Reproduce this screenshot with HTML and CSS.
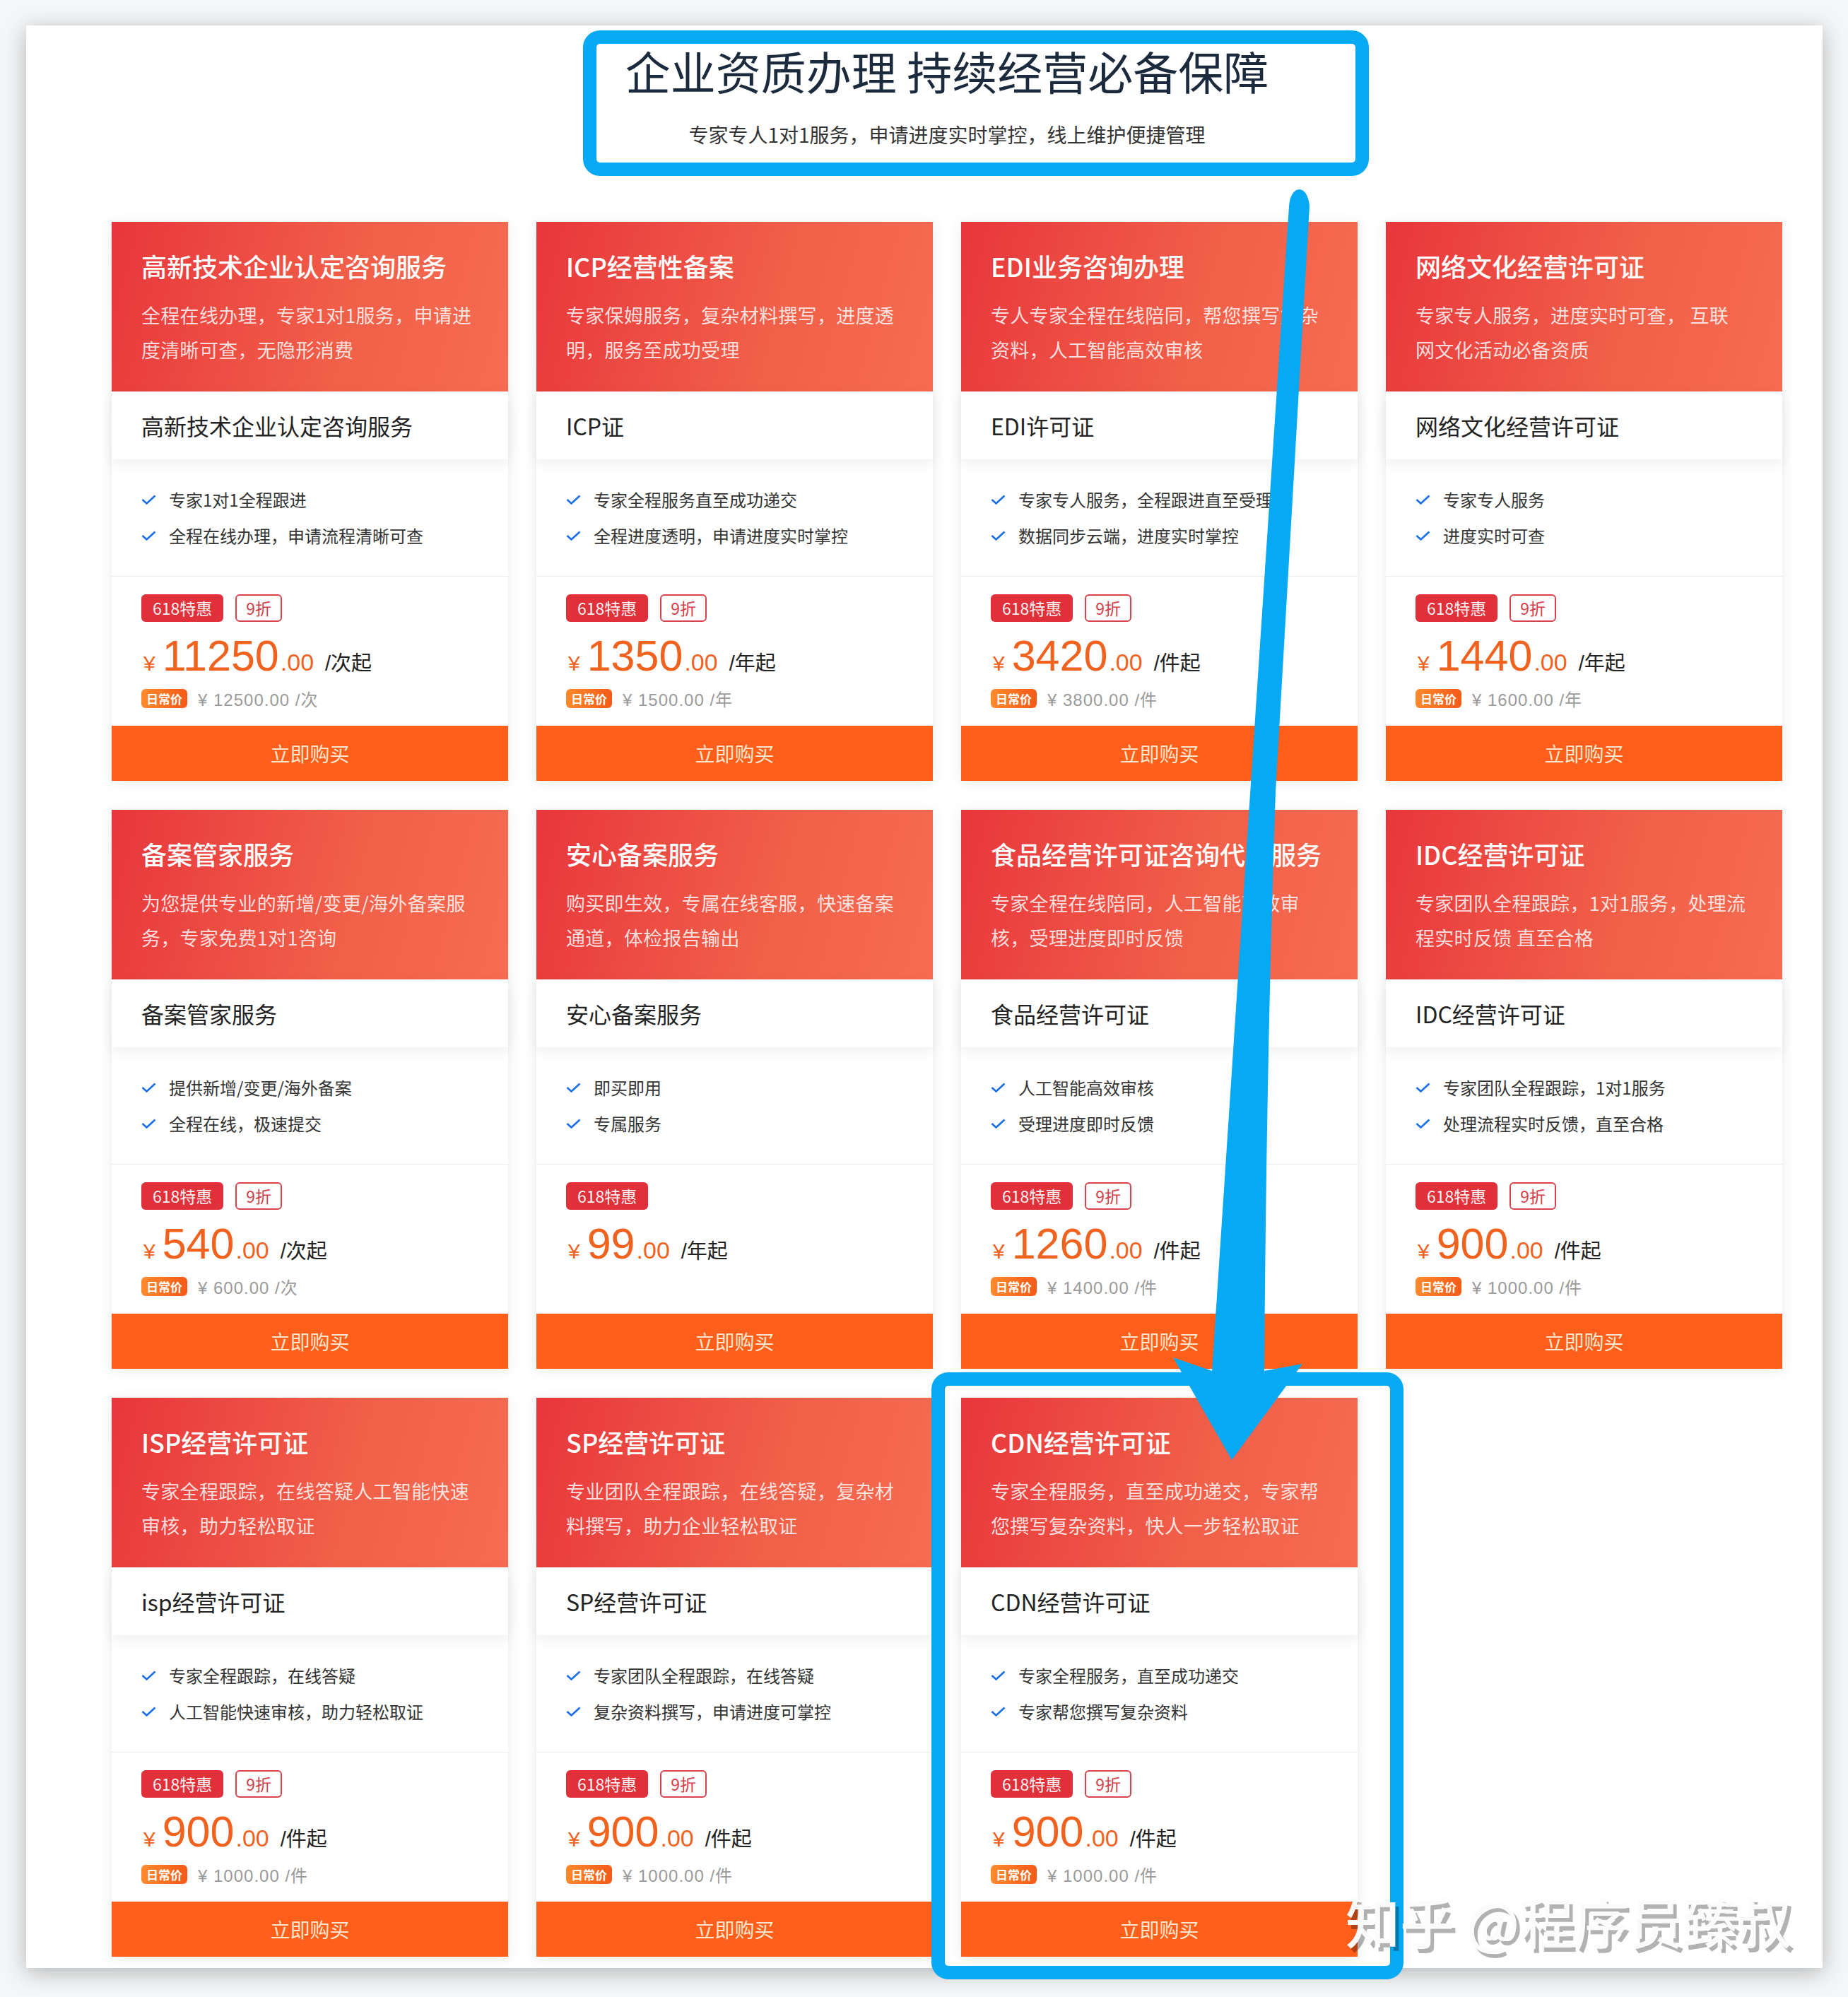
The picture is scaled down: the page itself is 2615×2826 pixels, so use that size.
FILE: index.html
```html
<!DOCTYPE html>
<html lang="zh-CN">
<head>
    <meta charset="UTF-8">
    <meta name="viewport" content="width=device-width, initial-scale=1.0">
    <title>企业资质办理</title>
    <link rel="stylesheet" href="styles.css">
</head>
<body>
    <div class="panel">
        <div class="intro">
            <h1>企业资质办理 持续经营必备保障</h1>
            <p>专家专人1对1服务，申请进度实时掌控，线上维护便捷管理</p>
        </div>

        <div class="cards">
            <div class="card">
                <div class="card-head">
                    <h3>高新技术企业认定咨询服务</h3>
                    <p>全程在线办理，专家1对1服务，申请进度清晰可查，无隐形消费</p>
                </div>
                <div class="card-name">高新技术企业认定咨询服务</div>
                <ul class="features">
                    <li>专家1对1全程跟进</li>
                    <li>全程在线办理，申请流程清晰可查</li>
                </ul>
                <div class="card-price">
                    <div class="tags"><span class="tag-hot">618特惠</span><span class="tag-off">9折</span></div>
                    <div class="price"><span class="yen">¥</span><span class="num">11250</span><span class="dec">.00</span><span class="unit">/次起</span></div>
                    <div class="daily"><span class="daily-tag">日常价</span><span class="daily-price">¥ 12500.00 /次</span></div>
                </div>
                <button class="buy">立即购买</button>
            </div>

            <div class="card">
                <div class="card-head">
                    <h3>ICP经营性备案</h3>
                    <p>专家保姆服务，复杂材料撰写，进度透明，服务至成功受理</p>
                </div>
                <div class="card-name">ICP证</div>
                <ul class="features">
                    <li>专家全程服务直至成功递交</li>
                    <li>全程进度透明，申请进度实时掌控</li>
                </ul>
                <div class="card-price">
                    <div class="tags"><span class="tag-hot">618特惠</span><span class="tag-off">9折</span></div>
                    <div class="price"><span class="yen">¥</span><span class="num">1350</span><span class="dec">.00</span><span class="unit">/年起</span></div>
                    <div class="daily"><span class="daily-tag">日常价</span><span class="daily-price">¥ 1500.00 /年</span></div>
                </div>
                <button class="buy">立即购买</button>
            </div>

            <div class="card">
                <div class="card-head">
                    <h3>EDI业务咨询办理</h3>
                    <p>专人专家全程在线陪同，帮您撰写复杂资料，人工智能高效审核</p>
                </div>
                <div class="card-name">EDI许可证</div>
                <ul class="features">
                    <li>专家专人服务，全程跟进直至受理</li>
                    <li>数据同步云端，进度实时掌控</li>
                </ul>
                <div class="card-price">
                    <div class="tags"><span class="tag-hot">618特惠</span><span class="tag-off">9折</span></div>
                    <div class="price"><span class="yen">¥</span><span class="num">3420</span><span class="dec">.00</span><span class="unit">/件起</span></div>
                    <div class="daily"><span class="daily-tag">日常价</span><span class="daily-price">¥ 3800.00 /件</span></div>
                </div>
                <button class="buy">立即购买</button>
            </div>

            <div class="card">
                <div class="card-head">
                    <h3>网络文化经营许可证</h3>
                    <p>专家专人服务，进度实时可查， 互联<br>网文化活动必备资质</p>
                </div>
                <div class="card-name">网络文化经营许可证</div>
                <ul class="features">
                    <li>专家专人服务</li>
                    <li>进度实时可查</li>
                </ul>
                <div class="card-price">
                    <div class="tags"><span class="tag-hot">618特惠</span><span class="tag-off">9折</span></div>
                    <div class="price"><span class="yen">¥</span><span class="num">1440</span><span class="dec">.00</span><span class="unit">/年起</span></div>
                    <div class="daily"><span class="daily-tag">日常价</span><span class="daily-price">¥ 1600.00 /年</span></div>
                </div>
                <button class="buy">立即购买</button>
            </div>

            <div class="card">
                <div class="card-head">
                    <h3>备案管家服务</h3>
                    <p>为您提供专业的新增/变更/海外备案服务，专家免费1对1咨询</p>
                </div>
                <div class="card-name">备案管家服务</div>
                <ul class="features">
                    <li>提供新增/变更/海外备案</li>
                    <li>全程在线，极速提交</li>
                </ul>
                <div class="card-price">
                    <div class="tags"><span class="tag-hot">618特惠</span><span class="tag-off">9折</span></div>
                    <div class="price"><span class="yen">¥</span><span class="num">540</span><span class="dec">.00</span><span class="unit">/次起</span></div>
                    <div class="daily"><span class="daily-tag">日常价</span><span class="daily-price">¥ 600.00 /次</span></div>
                </div>
                <button class="buy">立即购买</button>
            </div>

            <div class="card">
                <div class="card-head">
                    <h3>安心备案服务</h3>
                    <p>购买即生效，专属在线客服，快速备案通道，体检报告输出</p>
                </div>
                <div class="card-name">安心备案服务</div>
                <ul class="features">
                    <li>即买即用</li>
                    <li>专属服务</li>
                </ul>
                <div class="card-price">
                    <div class="tags"><span class="tag-hot">618特惠</span></div>
                    <div class="price"><span class="yen">¥</span><span class="num">99</span><span class="dec">.00</span><span class="unit">/年起</span></div>
                </div>
                <button class="buy">立即购买</button>
            </div>

            <div class="card">
                <div class="card-head">
                    <h3>食品经营许可证咨询代办服务</h3>
                    <p>专家全程在线陪同，人工智能高效审<br>核，受理进度即时反馈</p>
                </div>
                <div class="card-name">食品经营许可证</div>
                <ul class="features">
                    <li>人工智能高效审核</li>
                    <li>受理进度即时反馈</li>
                </ul>
                <div class="card-price">
                    <div class="tags"><span class="tag-hot">618特惠</span><span class="tag-off">9折</span></div>
                    <div class="price"><span class="yen">¥</span><span class="num">1260</span><span class="dec">.00</span><span class="unit">/件起</span></div>
                    <div class="daily"><span class="daily-tag">日常价</span><span class="daily-price">¥ 1400.00 /件</span></div>
                </div>
                <button class="buy">立即购买</button>
            </div>

            <div class="card">
                <div class="card-head">
                    <h3>IDC经营许可证</h3>
                    <p>专家团队全程跟踪，1对1服务，处理流程实时反馈 直至合格</p>
                </div>
                <div class="card-name">IDC经营许可证</div>
                <ul class="features">
                    <li>专家团队全程跟踪，1对1服务</li>
                    <li>处理流程实时反馈，直至合格</li>
                </ul>
                <div class="card-price">
                    <div class="tags"><span class="tag-hot">618特惠</span><span class="tag-off">9折</span></div>
                    <div class="price"><span class="yen">¥</span><span class="num">900</span><span class="dec">.00</span><span class="unit">/件起</span></div>
                    <div class="daily"><span class="daily-tag">日常价</span><span class="daily-price">¥ 1000.00 /件</span></div>
                </div>
                <button class="buy">立即购买</button>
            </div>

            <div class="card">
                <div class="card-head">
                    <h3>ISP经营许可证</h3>
                    <p>专家全程跟踪，在线答疑人工智能快速审核，助力轻松取证</p>
                </div>
                <div class="card-name">isp经营许可证</div>
                <ul class="features">
                    <li>专家全程跟踪，在线答疑</li>
                    <li>人工智能快速审核，助力轻松取证</li>
                </ul>
                <div class="card-price">
                    <div class="tags"><span class="tag-hot">618特惠</span><span class="tag-off">9折</span></div>
                    <div class="price"><span class="yen">¥</span><span class="num">900</span><span class="dec">.00</span><span class="unit">/件起</span></div>
                    <div class="daily"><span class="daily-tag">日常价</span><span class="daily-price">¥ 1000.00 /件</span></div>
                </div>
                <button class="buy">立即购买</button>
            </div>

            <div class="card">
                <div class="card-head">
                    <h3>SP经营许可证</h3>
                    <p>专业团队全程跟踪，在线答疑，复杂材料撰写，助力企业轻松取证</p>
                </div>
                <div class="card-name">SP经营许可证</div>
                <ul class="features">
                    <li>专家团队全程跟踪，在线答疑</li>
                    <li>复杂资料撰写，申请进度可掌控</li>
                </ul>
                <div class="card-price">
                    <div class="tags"><span class="tag-hot">618特惠</span><span class="tag-off">9折</span></div>
                    <div class="price"><span class="yen">¥</span><span class="num">900</span><span class="dec">.00</span><span class="unit">/件起</span></div>
                    <div class="daily"><span class="daily-tag">日常价</span><span class="daily-price">¥ 1000.00 /件</span></div>
                </div>
                <button class="buy">立即购买</button>
            </div>

            <div class="card">
                <div class="card-head">
                    <h3>CDN经营许可证</h3>
                    <p>专家全程服务，直至成功递交，专家帮您撰写复杂资料，快人一步轻松取证</p>
                </div>
                <div class="card-name">CDN经营许可证</div>
                <ul class="features">
                    <li>专家全程服务，直至成功递交</li>
                    <li>专家帮您撰写复杂资料</li>
                </ul>
                <div class="card-price">
                    <div class="tags"><span class="tag-hot">618特惠</span><span class="tag-off">9折</span></div>
                    <div class="price"><span class="yen">¥</span><span class="num">900</span><span class="dec">.00</span><span class="unit">/件起</span></div>
                    <div class="daily"><span class="daily-tag">日常价</span><span class="daily-price">¥ 1000.00 /件</span></div>
                </div>
                <button class="buy">立即购买</button>
            </div>
        </div>
    </div>

    <!-- annotations drawn over the screenshot -->
    <div class="mark mark-title"></div>
    <div class="mark mark-card"></div>
    <svg class="arrow" width="2615" height="2826" viewBox="0 0 2615 2826">
        <path d="M1824,292 C1826,260 1851,260 1853,292 L1805,1120 Q1792,1500 1789,1940 L1843,1930 L1743,2066 L1660,1921 L1715,1940 Z" fill="#06a9f4"/>
    </svg>
    <div class="watermark">知乎 @程序员臻叔</div>
</body>
</html>
```

FILE: styles.css
```css
body {
    margin: 0;
    position: relative;
    width: 2615px;
    height: 2826px;
    background: #f5f6f7;
    font-family: "Noto Sans CJK SC", sans-serif;
    overflow: hidden;
}

.panel {
    position: relative;
    width: 2542px;
    margin: 36px 0 0 37px;
    padding: 0 57px 16px 121px;
    box-sizing: border-box;
    background: #fff;
    box-shadow: 0 6px 30px rgba(0, 0, 0, 0.28);
}

.intro {
    text-align: center;
}

.intro h1 {
    margin: 0;
    padding-top: 23px;
    font-size: 64px;
    line-height: 80px;
    font-weight: 400;
    color: #1b2a3c;
}

.intro p {
    margin: 31px 0 0;
    font-size: 28px;
    line-height: 40px;
    color: #333;
}

.cards {
    display: grid;
    grid-template-columns: repeat(4, 561px);
    column-gap: 40px;
    row-gap: 41px;
    margin-top: 104px;
}

.card {
    display: flex;
    flex-direction: column;
    background: #fff;
    box-shadow: 0 2px 18px rgba(30, 40, 60, 0.09);
}

.card-head {
    height: 240px;
    box-sizing: border-box;
    padding: 38px 42px 0;
    background: linear-gradient(105deg, #e8363c 0%, #f16049 60%, #f66c52 100%);
    color: #fff;
}

.card-head h3 {
    margin: 0;
    font-size: 36px;
    line-height: 48px;
    font-weight: 500;
}

.card-head p {
    margin: 21px 0 0;
    font-size: 27px;
    line-height: 49px;
    letter-spacing: 0.3px;
    color: rgba(255, 255, 255, 0.84);
}

.card-name {
    position: relative;
    z-index: 1;
    height: 96px;
    padding: 0 42px;
    font-size: 32px;
    line-height: 96px;
    color: #222;
    background: #fff;
    box-shadow: 0 6px 18px rgba(0, 0, 0, 0.07);
}

.features {
    list-style: none;
    margin: 0;
    padding: 31px 42px 32px;
    border-bottom: 1px solid #ececec;
}

.features li {
    display: flex;
    align-items: center;
    gap: 18px;
    font-size: 24px;
    line-height: 51px;
    color: #333;
}

.features li::before {
    content: "";
    width: 21px;
    height: 14px;
    background: url("data:image/svg+xml,%3Csvg xmlns='http://www.w3.org/2000/svg' viewBox='0 0 21 14'%3E%3Cpolyline points='1.5,7 7.5,12.5 19.5,1.5' fill='none' stroke='%231a6fe8' stroke-width='2.6'/%3E%3C/svg%3E") no-repeat center / contain;
}

.card-price {
    height: 211px;
    box-sizing: border-box;
    padding: 25px 42px 0;
}

.tags {
    display: flex;
    gap: 17px;
}

.tag-hot,
.tag-off {
    height: 39px;
    box-sizing: border-box;
    border-radius: 6px;
    font-size: 23px;
    line-height: 39px;
}

.tag-hot {
    padding: 0 16px;
    background: #e0303a;
    color: #fff2f2;
}

.tag-off {
    padding: 0 13px;
    border: 2px solid #d9434d;
    line-height: 35px;
    color: #d13d48;
}

.price {
    margin-top: 15px;
    height: 66px;
    font-family: "Liberation Sans", "Noto Sans CJK SC", sans-serif;
    line-height: 66px;
    color: #f0621d;
    white-space: nowrap;
}

.yen {
    font-size: 30px;
    margin: 0 10px 0 3px;
}

.num {
    font-size: 61px;
}

.dec {
    font-size: 34px;
    margin-left: 2px;
}

.unit {
    margin-left: 16px;
    font-size: 29px;
    color: #222;
}

.daily {
    display: flex;
    align-items: center;
    gap: 15px;
    margin-top: 10px;
}

.daily-tag {
    height: 27px;
    padding: 0 7px;
    border-radius: 6px;
    background: linear-gradient(90deg, #ff8a2b, #f45a19);
    font-size: 17px;
    line-height: 27px;
    font-weight: 700;
    color: #fff;
}

.daily-price {
    font-family: "Liberation Sans", "Noto Sans CJK SC", sans-serif;
    font-size: 24px;
    letter-spacing: 1px;
    color: #9a9a9a;
}

.buy {
    height: 78px;
    border: none;
    background: #ff5f1a;
    color: #ffe6cf;
    font-family: "Noto Sans CJK SC", sans-serif;
    font-size: 28px;
    cursor: pointer;
}

/* blue highlight boxes and arrow */
.mark {
    position: absolute;
    z-index: 10;
    box-sizing: border-box;
    border: 19px solid #06a9f4;
    border-radius: 24px;
}

.mark-title {
    left: 825px;
    top: 43px;
    width: 1112px;
    height: 206px;
}

.mark-card {
    left: 1318px;
    top: 1942px;
    width: 668px;
    height: 859px;
}

.arrow {
    position: absolute;
    z-index: 10;
    left: 0;
    top: 0;
    pointer-events: none;
}

.watermark {
    position: absolute;
    z-index: 11;
    left: 1904px;
    top: 2668px;
    font-size: 77px;
    line-height: 100px;
    font-weight: 500;
    color: #fbfbfb;
    text-shadow: 5px 6px 0 rgba(0, 0, 0, 0.3);
    white-space: nowrap;
}
```
